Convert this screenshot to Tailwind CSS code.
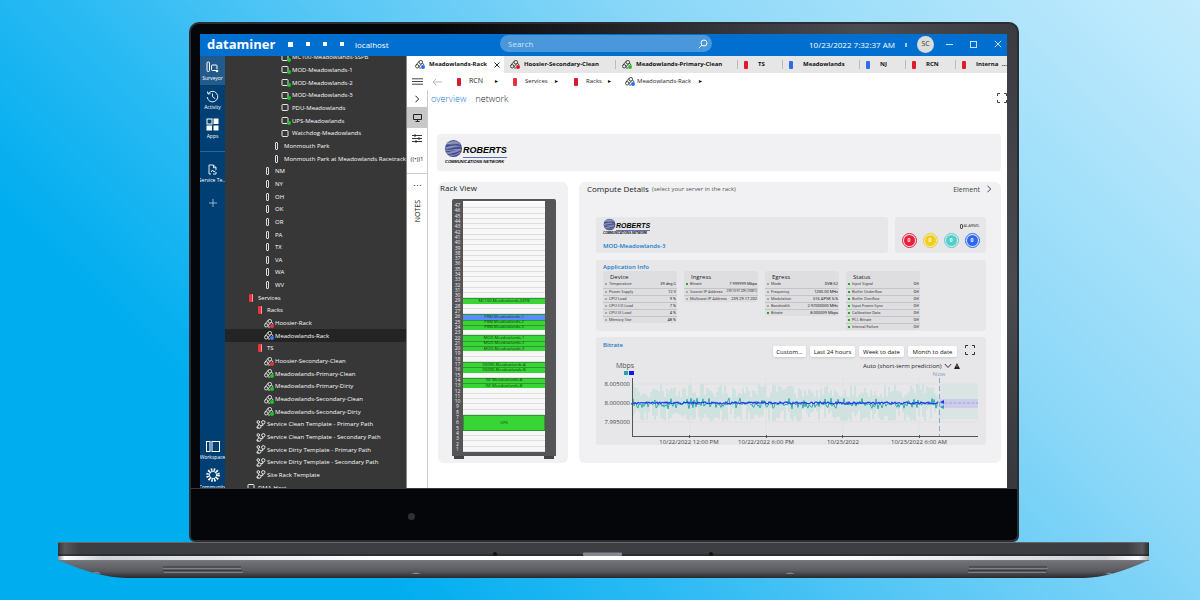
<!DOCTYPE html>
<html lang="en">
<head>
<meta charset="utf-8">
<title>DataMiner</title>
<script src="https://cdn.jsdelivr.net/npm/@tailwindcss/browser@4"></script>
</head>
<body class="h-screen min-h-[600px] flex flex-col pt-[22px] pb-[22px] overflow-hidden font-['Open_Sans',sans-serif] bg-[linear-gradient(45deg,#00adef_0%,#00adef_22%,#2abaf3_37%,#55c6f5_50%,#8dd8f8_70%,#c4ecfd_100%)]">

<svg class="hidden">
  <defs>
    <symbol id="svc" viewBox="0 0 10 9"><g fill="none" stroke="currentColor" stroke-width=".8"><circle cx="5.8" cy="2.2" r="1.8"/><circle cx="2.2" cy="6.3" r="1.7"/><path d="M1 5 4.2 1.2M3.8 7 6.5 3.8M7.5 3 9.2 5.2M4 8h2"/></g></symbol>
    <symbol id="tmpl" viewBox="0 0 10 9"><g fill="none" stroke="currentColor" stroke-width=".9"><circle cx="2.3" cy="2" r="1.3"/><circle cx="7.3" cy="2.3" r="1.7"/><circle cx="3.3" cy="6.6" r="1.7"/><path d="M2.3 3.4 3 4.9M6.8 4v1.6H5M1 6.5v1.6h1.3"/></g></symbol>
    <symbol id="box" viewBox="0 0 10 9"><rect x="1" y="1.5" width="6" height="6" rx=".8" fill="none" stroke="currentColor" stroke-width=".9"/></symbol>
    <symbol id="expand" viewBox="0 0 10 10"><path d="M.5 3V.5H3M7 .5h2.5V3M9.5 7v2.5H7M3 9.5H.5V7" fill="none" stroke="currentColor"/></symbol>
    <symbol id="chev" viewBox="0 0 6 8"><path d="M1.5 .8 4.7 4 1.5 7.2" fill="none" stroke="currentColor"/></symbol>
    <symbol id="globe" viewBox="0 0 20 20">
      <circle cx="10" cy="10" r="9" fill="#3f4a94"/>
      <path d="M2 6c3-5 12-5 16-1-5-2-10 0-16 1zM1.500 9c5-2 11-3 17-1-5 0-11 2-17 3zM2 14c5 0 9-3 16-3-1 2-8 4-14 5z" fill="#8a90ad"/>
      <path d="M3 4.500c5 2 11-1 14 1M2 12c5 1 9-2 16-1M6 17c4 1 8-1 11-3" fill="none" stroke="#a9aec4" stroke-width=".8"/>
    </symbol>
  </defs>
</svg>

<!-- Lid -->
<section class="flex-1 min-h-0 flex flex-col ml-[189px] mr-[181px] rounded-t-[10px] rounded-b-[6px] border-2 border-[#2c2e34] bg-[#05060a] bg-[linear-gradient(60deg,#05060a_0%,#05060a_48%,#4a4b50_86%,#3a3b40_100%)] pt-[10px] pl-[9px] pr-[10px] relative">
  <div class="flex-1 min-h-0 flex flex-col bg-white overflow-hidden">

    <header class="h-[22px] shrink-0 bg-[#006fcf] text-white flex items-center pl-[7px] pr-[5px]">
      <h1 class="text-[13px] leading-none font-bold w-[81px] -mt-[1px]">dataminer</h1>
      <div class="flex items-center w-[67px] gap-[13px] -mt-[2px]"><i class="size-[5px] bg-white"></i><i class="size-[4px] bg-white"></i><i class="size-[4px] bg-white"></i><i class="size-[4px] bg-white"></i></div>
      <span class="text-[8px] leading-none">localhost</span>
      <label class="ml-auto mr-[97px] w-[212px] h-[17px] mb-[3px] rounded-full bg-[#4a98db] flex items-center pl-[8px] pr-[4px]">
        <input type="search" aria-label="Search" placeholder="Search" class="flex-1 min-w-0 bg-transparent text-[8px] placeholder:text-[#cfe5f8] outline-none">
        <svg class="size-[10px]" viewBox="0 0 10 10" fill="none" stroke="#fff"><circle cx="6" cy="4" r="3"/><path d="M3.800 6.200.8 9.200"/></svg>
      </label>
      <time class="text-[8px] leading-none">10/23/2022 7:32:37 AM</time>
      <i class="mx-[10px] w-[2px] h-[4px] bg-[#9cc8ef]"></i>
      <span class="size-[17px] rounded-full bg-[#dcdcdc] text-[#333] text-[7px] flex items-center justify-center mr-[12px] -mt-[2px]">SC</span>
      <button aria-label="Minimize" class="w-[7px] h-px bg-white/80 mr-[17px] -mt-[2px]"></button>
      <button aria-label="Maximize" class="size-[7px] border border-white/80 mr-[17px] -mt-[2px]"></button>
      <button aria-label="Close" class="size-[8px] -mt-[2px]"><svg viewBox="0 0 8 8" stroke="#fff" stroke-width=".8"><path d="m.8.8 6.400 6.400M7.200.8.8 7.200"/></svg></button>
    </header>

    <div class="flex-1 min-h-0 flex">
      <!-- App rail -->
      <nav class="w-[25px] shrink-0 bg-[#003f73] text-white text-[5px] leading-[6px] flex flex-col items-center overflow-hidden">
        <a href="#" class="w-full h-[29px] bg-[#235a8c] flex flex-col items-center justify-center gap-[2px]">
          <svg class="w-[13px] h-[12px]" viewBox="0 0 13 12" fill="none" stroke="currentColor"><rect x="1" y="1" width="2.500" height="9.500" rx="1"/><path d="M10 9.500H6.500a1 1 0 0 1-1-1V5a1 1 0 0 1 1-1H10a1 1 0 0 1 1 1v3" /><circle cx="11" cy="10" r="1.300" fill="currentColor" stroke="none"/></svg>Surveyor</a>
        <a href="#" class="h-[29px] flex flex-col items-center justify-center gap-[1px]">
          <svg class="size-[13px]" viewBox="0 0 13 13" fill="none" stroke="currentColor" stroke-width=".9"><path d="M2 3.800A5.300 5.300 0 1 1 1.200 7M1.500 1.500 2 4l2.500-.3M6.500 3.500v3.200l2.700 2"/></svg>Activity</a>
        <a href="#" class="h-[29px] flex flex-col items-center justify-center gap-[2px]">
          <svg class="size-[13px]" viewBox="0 0 13 13"><rect x="1" y="1" width="5" height="5" fill="none" stroke="#fff"/><path d="M7.500.500h5v5.500h-5zM.500 7.500H6v5H.500zM7.500 7.500h5v5h-5z" fill="#fff"/></svg>Apps</a>
        <hr class="w-full border-[#2a6596] mt-[8px]">
        <a href="#" class="mt-[12px] flex flex-col items-center gap-[2px]">
          <svg class="w-[9px] h-[11px]" viewBox="0 0 9 11" fill="none" stroke="currentColor" stroke-width=".9"><path d="M3 10H1V1h4.500L8 3.500V6M5.500 1v2.700H8M3 8l1.500-2L6 8l1.500-1M5 10h3V8"/></svg><span class="whitespace-nowrap">Service Te…</span></a>
        <button aria-label="Add" class="size-[8px] mt-[16px]"><svg viewBox="0 0 8 8" stroke="#b9cde0" stroke-width=".8"><path d="M4 0v8M0 4h8"/></svg></button>
        <a href="#" class="mt-auto flex flex-col items-center gap-[2px]">
          <svg class="w-[14px] h-[11px]" viewBox="0 0 14 11" fill="none" stroke="currentColor"><rect x=".500" y=".500" width="3.500" height="10"/><rect x="6" y=".500" width="7.500" height="10"/></svg>Workspace</a>
        <a href="#" class="mt-[8px] flex flex-col items-center gap-[2px] -mb-[2px]">
          <svg class="size-[14px]" viewBox="0 0 14 14" fill="none" stroke="#fff"><circle cx="7" cy="7" r="5" stroke-width="3.600" stroke-dasharray="1.400 1.218"/><circle cx="7" cy="7" r="3.600" stroke-width=".7"/></svg>Community</a>
      </nav>

      <!-- Surveyor tree -->
      <aside class="w-[181px] shrink-0 bg-[#373737] overflow-hidden">
        <ul id="tree" class="h-[443px] -mt-[5px] flex flex-col text-[#fafafa] text-[6px] leading-none whitespace-nowrap"></ul>
      </aside>

      <!-- Card area -->
      <main class="flex-1 min-w-0 flex flex-col border-l border-[#888]">
        <div class="h-[17px] shrink-0 bg-[#e6e6e6] flex items-center text-[6px] font-bold text-[#111] whitespace-nowrap overflow-hidden">
          <a href="#" class="w-[97px] h-full shrink-0 bg-white flex items-center pl-[8px] gap-[4px]"><span class="flex items-end"><svg class="w-[10px] h-[9px] text-[#222]"><use href="#svc"/></svg><i class="-ml-[4px] size-[4px] rounded-full bg-[#2f6bff]"></i></span>Meadowlands-Rack<svg class="ml-[3px] size-[6px]" viewBox="0 0 6 6" stroke="#111" stroke-width=".9"><path d="m.5.5 5 5M5.500.500l-5 5"/></svg></a>
          <a href="#" class="w-[112px] shrink-0 flex items-center pl-[6px] gap-[4px] border-r border-[#bbb]"><span class="flex items-end"><svg class="w-[10px] h-[9px] text-[#222]"><use href="#svc"/></svg><i class="-ml-[4px] size-[4px] rounded-full bg-[#e81123]"></i></span>Hoosier-Secondary-Clean</a>
          <a href="#" class="w-[122px] shrink-0 flex items-center pl-[6px] gap-[4px] border-r border-[#bbb]"><span class="flex items-end"><svg class="w-[10px] h-[9px] text-[#222]"><use href="#svc"/></svg><i class="-ml-[4px] size-[4px] rounded-full bg-[#1fc61f]"></i></span>Meadowlands-Primary-Clean</a>
          <a href="#" class="w-[45px] shrink-0 flex items-center pl-[6px] gap-[10px] border-r border-[#bbb]"><i class="w-[4px] h-[8px] rounded-[1px] bg-[#e01b2c]"></i>TS</a>
          <a href="#" class="w-[77px] shrink-0 flex items-center pl-[6px] gap-[10px] border-r border-[#bbb]"><i class="w-[4px] h-[8px] rounded-[1px] bg-[#2f6bea]"></i>Meadowlands</a>
          <a href="#" class="w-[46px] shrink-0 flex items-center pl-[6px] gap-[10px] border-r border-[#bbb]"><i class="w-[4px] h-[8px] rounded-[1px] bg-[#2f6bea]"></i>NJ</a>
          <a href="#" class="w-[50px] shrink-0 flex items-center pl-[6px] gap-[10px] border-r border-[#bbb]"><i class="w-[4px] h-[8px] rounded-[1px] bg-[#e01b2c]"></i>RCN</a>
          <a href="#" class="shrink-0 flex items-center pl-[6px] gap-[10px]"><i class="w-[4px] h-[8px] rounded-[1px] bg-[#e01b2c]"></i>Interna</a>
          <span class="ml-auto">…</span>
        </div>

        <div class="h-[17px] shrink-0 flex items-center text-[6px] text-[#222] whitespace-nowrap pl-[5px]">
          <button aria-label="Menu" class="w-[11px] mr-[9px]"><svg viewBox="0 0 11 7" stroke="#333" stroke-width=".9"><path d="M0 .8h11M0 3.500h11M0 6.200h11"/></svg></button>
          <button aria-label="Back" class="w-[10px] mr-[15px]"><svg viewBox="0 0 10 8" fill="none" stroke="#bbb"><path d="M10 4H1M4 1 1 4l3 3"/></svg></button>
          <a href="#" class="flex items-center gap-[8px] w-[38px] text-[7px]"><i class="w-[4px] h-[8px] rounded-[1px] bg-[#d81b2c]"></i>RCN</a><span class="w-[18px] text-black">▸</span>
          <a href="#" class="flex items-center gap-[8px] w-[42px]"><i class="w-[4px] h-[8px] rounded-[1px] bg-[#e8303c]"></i>Services</a><span class="w-[19px] text-black">▸</span>
          <a href="#" class="flex items-center gap-[8px] w-[34px]"><i class="w-[4px] h-[8px] rounded-[1px] bg-[#d81b2c]"></i>Racks</a><span class="w-[17px] text-black">▸</span>
          <a href="#" class="flex items-center gap-[2px] w-[74px]"><span class="flex items-end"><svg class="w-[10px] h-[9px]"><use href="#svc"/></svg><i class="-ml-[4px] size-[4px] rounded-full bg-[#2f6bff]"></i></span>Meadowlands-Rack</a><span class="text-black">▸</span>
        </div>

        <div class="flex-1 min-h-0 flex">
          <div class="w-[21px] shrink-0 border-r border-[#ccc] flex flex-col items-center text-[#222]">
            <button aria-label="Expand" class="h-[17px]"><svg class="w-[6px] h-[8px]"><use href="#chev"/></svg></button>
            <button aria-label="Visual" class="w-full h-[21px] bg-[#c8c8c8] flex items-center justify-center"><svg class="w-[9px] h-[8px]" viewBox="0 0 9 8" fill="none" stroke="currentColor"><path d="M.500.500h8v5h-8zM2.500 7.500h4M4.500 5.500v2"/></svg></button>
            <button aria-label="Data" class="h-[21px]"><svg class="w-[10px] h-[9px]" viewBox="0 0 10 9" fill="none" stroke="currentColor" stroke-width=".9"><path d="M0 1.500h10M0 4.500h10M0 7.500h10M3 0v3M7 3v3M4 6v3"/></svg></button>
            <button class="h-[21px] text-[6px]">((•))1</button>
            <hr class="w-full border-[#ccc] mt-[3px]">
            <button aria-label="More" class="text-[9px] leading-[12px] mt-[6px]">⋯</button>
            <button class="text-[7px] leading-none font-medium text-black mt-[8px] [writing-mode:vertical-rl] rotate-180">NOTES</button>
          </div>

          <div class="flex-1 min-w-0 flex flex-col pr-[6px]">
            <div class="h-[16px] flex items-center text-[9px] leading-none gap-[9px] pl-[3px] -mr-[6px] font-light">
              <a href="#" class="text-[#1679d0]">overview</a><a href="#" class="text-[#222]">network</a>
              <button aria-label="Full screen" class="ml-auto size-[10px] text-[#444]"><svg class="size-[10px]"><use href="#expand"/></svg></button>
            </div>
            <div class="mt-[28px] ml-[9px] h-[37px] shrink-0 rounded-[4px] bg-[#f1f1f3] pl-[7px] pt-[5px]">
              <div class="w-[66px] font-['Liberation_Sans',sans-serif] font-bold italic text-black">
                <div class="flex items-end"><svg class="size-[19px] shrink-0"><use href="#globe"/></svg><b class="text-[9px] leading-[14px] h-[15px] border-b border-[#5a6fc0]">ROBERTS</b></div>
                <p class="text-[4px] leading-[7px] whitespace-nowrap pl-px">COMMUNICATIONS NETWORK</p>
              </div>
            </div>

            <div class="mt-[11px] ml-[10px] h-[281px] flex gap-[11px]">
              <section class="w-[130px] shrink-0 rounded-[6px] bg-[#f1f1f3] flex flex-col">
                <h2 class="h-[17px] pt-[2px] pl-[2px] text-[8px] leading-none text-[#222]">Rack View</h2>
                <div class="ml-[14px] w-[104px] h-[257px] rounded-t-[2px] bg-[#555558] flex pt-[2px] pr-[11px]">
                  <ol id="units" class="w-[11px] h-[251px] pt-[2px] flex flex-col text-[5px] leading-none text-[#ececec] text-center"></ol>
                  <div id="rack" class="flex-1 h-[251px] pt-[2px] bg-white flex flex-col text-[4px] text-center text-[#0f3d0f] leading-none"></div>
                </div>
                <div class="ml-[14px] w-[104px] flex justify-between px-[2px]"><i class="w-[10px] h-[3px] bg-[#444]"></i><i class="w-[10px] h-[3px] bg-[#444]"></i></div>
              </section>

              <section class="flex-1 min-w-0 rounded-[6px] bg-[#f1f1f3] pl-[17px] pr-[15px]">
                <div class="h-[14px] -ml-[9px] -mr-[6px] flex items-center text-[8px] leading-none text-[#222]">
                  <h2>Compute Details</h2><span class="ml-[3px] text-[6px] text-[#555]">(select your server in the rack)</span>
                  <a href="#" class="ml-auto flex items-center gap-[6px] text-[7px] text-[#444]">Element<svg class="w-[6px] h-[8px]"><use href="#chev"/></svg></a>
                </div>
                <div class="mt-[21px] flex gap-[7px] h-[36px]">
                  <div class="flex-1 rounded-[3px] bg-[#e7e7e9] pl-[7px] pt-px">
                    <div class="w-[46px] font-['Liberation_Sans',sans-serif] font-bold italic text-black">
                      <div class="flex items-end"><svg class="size-[13px] shrink-0"><use href="#globe"/></svg><b class="text-[7px] leading-[9px] h-[10px] border-b border-[#5a6fc0]">ROBERTS</b></div>
                      <p class="text-[3px] leading-[5px] whitespace-nowrap">COMMUNICATIONS NETWORK</p>
                    </div>
                    <p class="mt-[6px] text-[6px] leading-[8px] font-semibold text-[#1679c8]">MOD-Meadowlands-3</p>
                  </div>
                  <div class="w-[91px] rounded-[3px] bg-[#e7e7e9] pt-[6px]">
                    <p class="text-[4px] leading-[6px] text-[#333] flex justify-end items-center gap-px pr-[7px]"><i class="w-[3px] h-[5px] rounded-[1px] border border-[#555]"></i>ALARMS</p>
                    <div class="mt-[4px] flex justify-center gap-[6px] text-[5px] font-bold text-white leading-none">
                      <span class="size-[15px] rounded-full border border-[#ee1f3a] bg-[#ee1f3a] bg-clip-content p-px flex items-center justify-center">0</span>
                      <span class="size-[15px] rounded-full border border-[#f3cf13] bg-[#f3cf13] bg-clip-content p-px flex items-center justify-center">0</span>
                      <span class="size-[15px] rounded-full border border-[#4fd0cd] bg-[#4fd0cd] bg-clip-content p-px flex items-center justify-center">0</span>
                      <span class="size-[15px] rounded-full border border-[#2c68f5] bg-[#2c68f5] bg-clip-content p-px flex items-center justify-center">0</span>
                    </div>
                  </div>
                </div>

                <div class="mt-[7px] h-[71px] rounded-[3px] bg-[#e7e7e9] px-[7px] pt-[3px]">
                  <h3 class="text-[6px] leading-[8px] font-semibold text-[#1679c8]">Application Info</h3>
                  <div id="info" class="flex items-start gap-[7px]"></div>
                </div>

                <div class="mt-[6px] h-[108px] rounded-[3px] bg-[#e7e7e9] flex flex-col">
                  <div class="flex items-start h-[24px] pl-[7px] pr-[11px] pt-[4px]">
                    <h3 class="text-[6px] leading-[8px] font-semibold text-[#1679c8] mr-auto">Bitrate</h3>
                    <div class="flex gap-[4px] pt-[5px] text-[6px] leading-none text-[#111] whitespace-nowrap">
                      <button class="w-[33px] h-[11px] bg-white rounded-[2px] shadow-sm">Custom...</button>
                      <button class="w-[45px] h-[11px] bg-white rounded-[2px] shadow-sm">Last 24 hours</button>
                      <button class="w-[45px] h-[11px] bg-white rounded-[2px] shadow-sm">Week to date</button>
                      <button class="w-[49px] h-[11px] bg-white rounded-[2px] shadow-sm">Month to date</button>
                    </div>
                    <button aria-label="Expand chart" class="ml-[8px] mt-[4px] size-[10px] text-[#333]"><svg class="size-[10px]"><use href="#expand"/></svg></button>
                  </div>
                  <div class="h-[9px] flex items-center text-[6px] leading-none text-[#222] pl-[20px] pr-[26px]">
                    <span class="mr-auto text-[7px] text-[#555]">Mbps</span>
                    <select aria-label="Trend mode" class="appearance-none text-[6px] leading-none h-[9px]"><option>Auto (short-term prediction)</option></select>
                    <svg class="w-[8px] h-[6px] ml-[2px]" viewBox="0 0 8 6" fill="none" stroke="#333"><path d="M.8 1 4 4.500 7.200 1"/></svg>
                    <svg class="w-[6px] h-[6px] ml-[2px]" viewBox="0 0 6 6"><path d="M3 0 6 6H0z" fill="#222"/><path d="M3 2v2" stroke="#e7c070" stroke-width=".6"/></svg>
                  </div>
                  <svg id="chart" class="w-full h-[75px] font-['Open_Sans']" viewBox="0 0 390 75"></svg>
                </div>
              </section>
            </div>
          </div>
        </div>
      </main>
    </div>
  </div>
  <div class="h-[52px] shrink-0 -ml-[9px] -mr-[10px] bg-[#05060a] rounded-b-[5px] border-t border-[#3a3a3c] flex justify-center"><i class="mt-[24px] mr-[386px] size-[7px] rounded-full bg-[#2f3033]"></i></div>
</section>

<!-- Base -->
<svg class="shrink-0 ml-[58px] mr-[51px] h-[36px]" viewBox="0 0 1091 36" preserveAspectRatio="none">
  <defs>
    <linearGradient id="g1" x2="0" y2="1"><stop offset="0" stop-color="#75767b"/><stop offset=".6" stop-color="#5a5a5f"/><stop offset="1" stop-color="#29292d"/></linearGradient>
    <linearGradient id="g2"><stop offset="0" stop-color="#8c8f94"/><stop offset=".006" stop-color="#fff"/><stop offset=".04" stop-color="#cfd3d8"/><stop offset=".3" stop-color="#fff"/><stop offset=".7" stop-color="#fff"/><stop offset=".96" stop-color="#cfd3d8"/><stop offset=".99" stop-color="#fff"/><stop offset="1" stop-color="#aaa"/></linearGradient>
    <linearGradient id="g3"><stop offset="0" stop-color="#333437"/><stop offset=".006" stop-color="#56575b"/><stop offset=".02" stop-color="#3d3e42"/><stop offset=".98" stop-color="#3d3e42"/><stop offset=".994" stop-color="#56575b"/><stop offset="1" stop-color="#2c2d30"/></linearGradient>
  </defs>
  <path d="M0 18h1091q-38 17.500-65 18H68Q40 35.500 0 18z" fill="url(#g1)"/>
  <rect width="1091" height="14" fill="url(#g3)"/>
  <path d="M0 .5h1091" stroke="#66676b"/>
  <path d="M0 13h1091" stroke="#1c1c1f"/>
  <rect y="14" width="1091" height="4.500" fill="url(#g2)"/>
  <path d="M0 18.500h1091" stroke="#77787d"/>
  <rect x="525" y="10.500" width="39" height="3.500" rx="1" fill="#85868f"/>
  <circle cx="437" cy="12" r="2" fill="#111"/><circle cx="653" cy="12" r="2" fill="#111"/>
  <path d="M105 26.500h78M106 30.500h79M911 26.500h79M910 30.500h78" stroke="#7e7e83"/>
  <path d="M105 28.500h79M910 28.500h79M105 25h78M911 25h78" stroke="#3a3a3e"/>
  <path d="M353 32q5-3 10 0zM727 32q5-3 10 0zM35 31q4-3 8 1zM1047 32q4-3 8 0z" fill="#85868a"/>
</svg>

<script>
const G = 'bg-[#1fc61f]', R = 'bg-[#f0303c]', B = 'bg-[#3f7cf5]';
const rows = [
 ['box','MC100-Meadowlands-SSPB',56,G],['box','MOD-Meadowlands-1',56,G],['box','MOD-Meadowlands-2',56,G],['box','MOD-Meadowlands-3',56,G],
 ['box','PDU-Meadowlands',56],['box','UPS-Meadowlands',56,G],['box','Watchdog-Meadowlands',56],
 ['bar','Monmouth Park',48],['bar','Monmouth Park at Meadowlands Racetrack',48],
 ...['NM','NY','OH','OK','OR','PA','TX','VA','WA','WV'].map(s => ['bar',s,39]),
 ['red','Services',22],['red','Racks',31],['svc','Hoosier-Rack',39,R],['svc','Meadowlands-Rack',39,B],['red','TS',31],
 ['svc','Hoosier-Secondary-Clean',39,R],['svc','Meadowlands-Primary-Clean',39,G],['svc','Meadowlands-Primary-Dirty',39,G],['svc','Meadowlands-Secondary-Clean',39,G],['svc','Meadowlands-Secondary-Dirty',39,G],
 ['tmpl','Service Clean Template - Primary Path',31],['tmpl','Service Clean Template - Secondary Path',31],['tmpl','Service Dirty Template - Primary Path',31],['tmpl','Service Dirty Template - Secondary Path',31],['tmpl','Site Rack Template',31],
 ['box','DMA-Host',22]];
document.getElementById('tree').innerHTML = rows.map(([k,t,p,c]) => {
  let ic;
  if (k === 'bar') ic = '<i class="ml-[2px] w-[3px] h-[8px] border border-[#ddd] rounded-[1px]"></i>';
  else if (k === 'red') ic = '<i class="ml-[2px] w-[4px] h-[8px] bg-[#f0303c] rounded-[1px] border-r border-[#f7a0a0]"></i>';
  else ic = `<svg class="w-[10px] h-[9px] shrink-0"><use href="#${k}"/></svg>` + (c ? `<i class="-ml-[4px] mt-[5px] size-[4px] shrink-0 rounded-full ${c}"></i>` : '');
  return `<li class="flex-1 flex items-center ${t === 'Meadowlands-Rack' ? 'bg-[#242424]' : ''}" style="padding-left:${p}px"><span class="w-[11px] shrink-0 flex items-center">${ic}</span><a href="#">${t}</a></li>`;
}).join('');

document.getElementById('units').innerHTML = Array.from({length:47}, (_, i) => `<li class="flex-1 min-h-0 flex items-center justify-center">${47 - i}</li>`).join('');
const servers = {29:'MC100-Meadowlands-SSPB',26:'PRM-Meadowlands-1',25:'PRM-Meadowlands-2',24:'PRM-Meadowlands-3',22:'MOD-Meadowlands-1',21:'MOD-Meadowlands-2',20:'MOD-Meadowlands-3',17:'DS090-Meadowlands-A',16:'DS090-Meadowlands-B',14:'ISF-Meadowlands-A',13:'ISF-Meadowlands-B'};
let rk = '';
for (let n = 47; n > 0; n--) {
  if (n === 7) { rk += '<div class="flex-[3] min-h-0 bg-[#39d435] shadow-[inset_0_0_0_1px_#2c9a2a] flex items-center justify-center">UPS</div>'; n = 5; continue; }
  if (servers[n]) rk += `<div class="flex-1 min-h-0 shadow-[inset_0_1px_0_#2c9a2a] flex items-center justify-center whitespace-nowrap ${n === 26 ? 'bg-[#5b8cff]' : 'bg-[#39d435]'}">${servers[n]}</div>`;
  else rk += '<div class="flex-1 min-h-0 bg-[#f7f7f8] shadow-[inset_0_-1px_0_#dedee0]"></div>';
}
document.getElementById('rack').innerHTML = rk;

const cards = [
 ['Device',[['Temperature','39 deg C'],['Power Supply','12 V'],['CPU Load','9 %'],['CPU I/O Load','7 %'],['CPU Ul Load','4 %'],['Memory Use','48 %']]],
 ['Ingress',[['Bitrate','7.999999 Mbps',1],['Source IP Address','239.10.97.209 (10001)'],['Multicast IP Address','239.29.17.202']]],
 ['Egress',[['Mode','DVB-S2'],['Frequency','1200.00 MHz'],['Modulation','S16 APSK 5/6'],['Bandwidth','2.97000000 MHz'],['Bitrate','8.000009 Mbps',1]]],
 ['Status',[['Input Signal','Off',1],['Buffer Underflow','Off',1],['Buffer Overflow','Off',1],['Input Frame Sync','Off',1],['Calibration Data','Off',1],['PLL Bitrate','Off',1],['Internal Failure','Off',1]]]];
document.getElementById('info').innerHTML = cards.map(([t, rs]) =>
 `<table class="w-[74px] table-fixed rounded-[3px] bg-[#dedee1] font-['Roboto',sans-serif] text-[4px] leading-none text-[#444]"><caption class="rounded-t-[3px] bg-[#dedee1] h-[10px] pt-[3px] pl-[7px] text-left font-['Open_Sans',sans-serif] text-[6px] leading-[7px] text-[#222]">${t}</caption><tbody>` +
 rs.map(([a, b, on]) => `<tr class="h-[7px] border-b border-[#c4c4c8] last:border-0"><td class="pl-[2px] w-[6px]"><i class="block size-[2px] ${on ? 'bg-[#13b313]' : 'bg-[#aaa]'}"></i></td><td class="w-[32px] whitespace-nowrap">${a}</td><td class="pr-px text-right text-[#222]"><span class="flex justify-end whitespace-nowrap ${b.length > 20 ? 'text-[3px]' : ''}">${b}</span></td></tr>`).join('') + '</tbody></table>').join('');

// Trend chart
let s = 7; const rnd = () => (s = s * 16807 % 2147483647) / 2147483647;
let band = '', teal = 'M36 33', blue = 'M36 33';
for (let x = 36; x < 343; x += 2) { const a = 14 + rnd() * 14, b = 51 - rnd() * rnd() * 20; band += `<rect x="${x}" y="${a.toFixed(1)}" width="2" height="${(b - a).toFixed(1)}"/>`; }
for (let x = 36; x < 343; x += 1) { const k = rnd(); teal += `L${x} ${(33 + (k > .7 ? 6 : k < .2 ? -5 : 2) * rnd()).toFixed(1)}`; blue += `L${x} ${(32 + rnd() * 2).toFixed(1)}`; }
const T = (x, y, t, a, f = '#444') => `<text x="${x}" y="${y}" font-size="6" text-anchor="${a}" fill="${f}">${t}</text>`;
document.getElementById('chart').innerHTML =
 `<path d="M36 14h346M36 33h346M36 52h346M94 8v58M170 8v58M247 8v58M323 8v58" stroke="#dddde2" stroke-width=".6"/>
 <g fill="#cfe2e0">${band}</g><rect x="344" y="14" width="38" height="35" fill="#dae5e3"/><rect x="344" y="29" width="38" height="9" fill="#d2caed"/>
 <path d="M344 33h38" stroke="#74bcc0" stroke-dasharray="3 1.500"/>
 <path d="${teal}" fill="none" stroke="#22a7a7" stroke-width=".9"/><path d="${blue}" fill="none" stroke="#1d39f0" stroke-width="1.200"/>
 <path d="M343.500 8v58" stroke="#9aa4cc" stroke-dasharray="5 3"/>
 <path d="M344 32l4-2v4z" fill="#1d39f0"/><path d="M344 37l4-2v4z" fill="#22a7a7"/>
 <path d="M36.500 8v59M36 66.500h346M93.500 65v3M170.500 65v3M246.500 65v3M323.500 65v3" stroke="#555" fill="none"/>
 <rect x="28" y="1" width="4" height="4" fill="#22a7a7"/><rect x="33" y="1" width="5" height="4" fill="#1414ff"/>` +
 T(34,16,'8.005000','end') + T(34,35,'8.000000','end') + T(34,54,'7.995000','end') +
 T(93,74,'10/22/2022 12:00 PM','middle') + T(170,74,'10/22/2022 6:00 PM','middle') + T(247,74,'10/23/2022','middle') + T(323,74,'10/23/2022 6:00 AM','middle') + T(343,6,'Now','middle','#8f9ac4');
</script>
</body>
</html>
